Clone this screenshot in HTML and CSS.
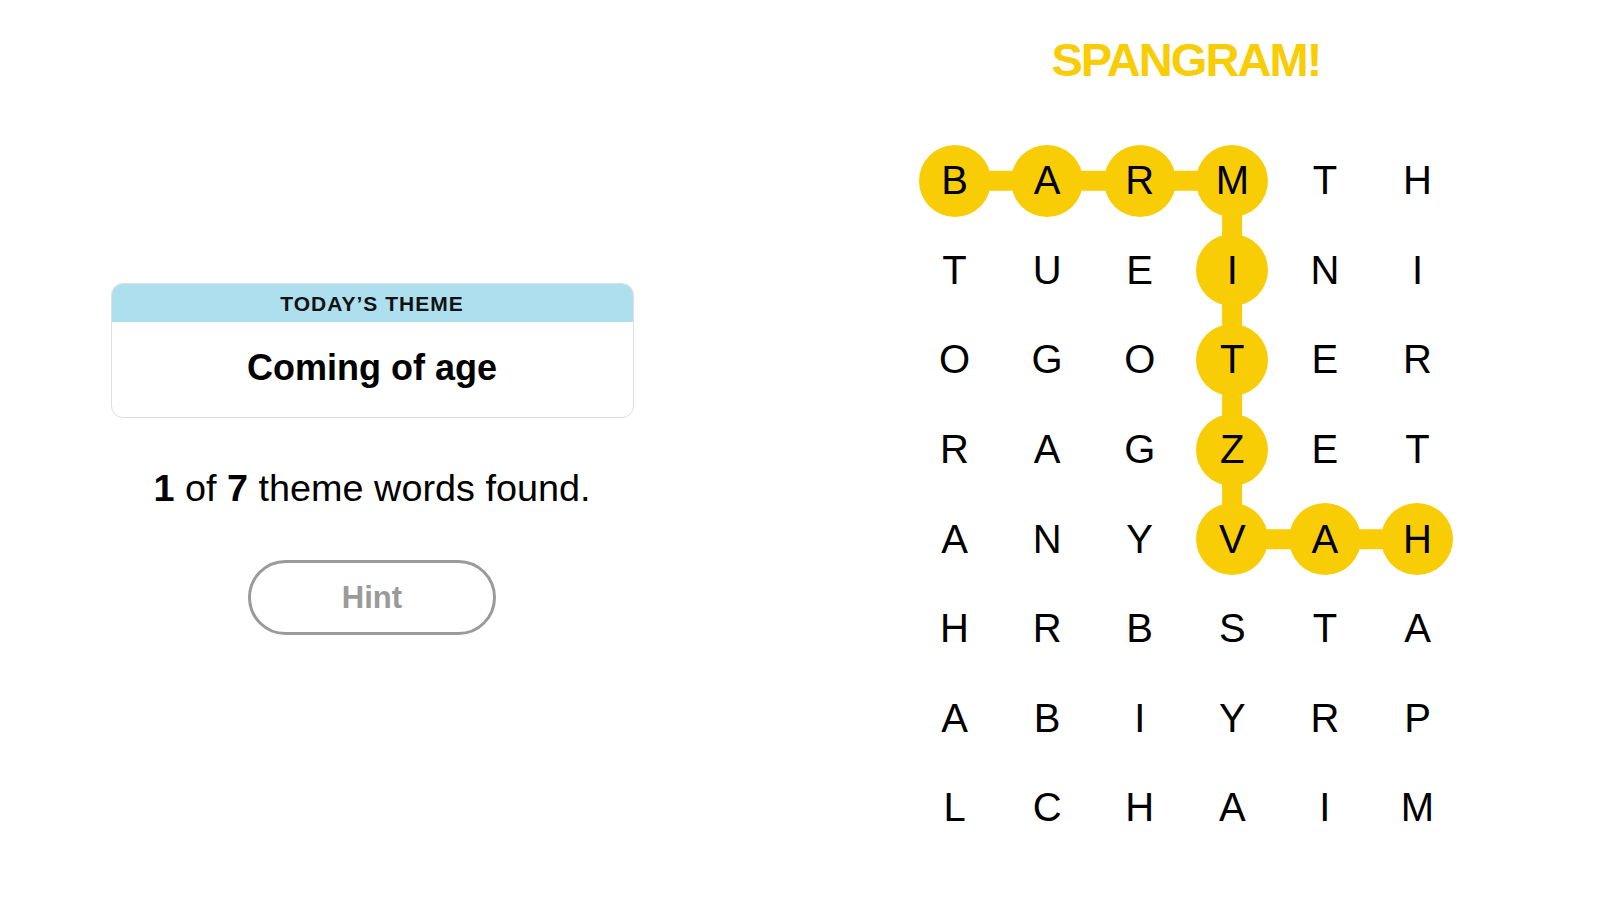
FILE: index.html
```html
<!DOCTYPE html>
<html lang="en">
<head>
<meta charset="utf-8">
<title>Strands</title>
<link rel="stylesheet" href="styles.css">
</head>
<body>
<main class="page">
  <section class="left">
    <div class="theme-card">
      <div class="theme-head">TODAY’S THEME</div>
      <div class="theme-body">Coming of age</div>
    </div>
    <p class="progress"><b>1</b> of <b>7</b> theme words found.</p>
    <button class="hint">Hint</button>
  </section>
  <section class="right">
    <h1 class="status">SPANGRAM!</h1>
    <div class="board">
      <svg class="links" viewBox="0 0 555.6 716.8" width="555.6" height="716.8" aria-hidden="true">
        <polyline points="46.3,44.8 324.1,44.8 324.1,403.2 509.3,403.2" fill="none" stroke="#f8cd05" stroke-width="20"/>
      </svg>
      <div class="cell sel">B</div><div class="cell sel">A</div><div class="cell sel">R</div><div class="cell sel">M</div><div class="cell">T</div><div class="cell">H</div>
      <div class="cell">T</div><div class="cell">U</div><div class="cell">E</div><div class="cell sel">I</div><div class="cell">N</div><div class="cell">I</div>
      <div class="cell">O</div><div class="cell">G</div><div class="cell">O</div><div class="cell sel">T</div><div class="cell">E</div><div class="cell">R</div>
      <div class="cell">R</div><div class="cell">A</div><div class="cell">G</div><div class="cell sel">Z</div><div class="cell">E</div><div class="cell">T</div>
      <div class="cell">A</div><div class="cell">N</div><div class="cell">Y</div><div class="cell sel">V</div><div class="cell sel">A</div><div class="cell sel">H</div>
      <div class="cell">H</div><div class="cell">R</div><div class="cell">B</div><div class="cell">S</div><div class="cell">T</div><div class="cell">A</div>
      <div class="cell">A</div><div class="cell">B</div><div class="cell">I</div><div class="cell">Y</div><div class="cell">R</div><div class="cell">P</div>
      <div class="cell">L</div><div class="cell">C</div><div class="cell">H</div><div class="cell">A</div><div class="cell">I</div><div class="cell">M</div>
    </div>
  </section>
</main>
</body>
</html>
```
FILE: styles.css
```css
* { box-sizing: border-box; }
html, body {
  margin: 0;
  padding: 0;
  background: #ffffff;
  font-family: "Liberation Sans", Arial, sans-serif;
  color: #121212;
}
.page {
  display: flex;
  width: 1600px;
  height: 900px;
}
.left {
  width: 744px;
  display: flex;
  flex-direction: column;
  align-items: center;
  padding-top: 283px;
}
.theme-card {
  width: 523px;
  border: 1px solid #dedede;
  border-radius: 12px;
  overflow: hidden;
  background: #fff;
}
.theme-head {
  background: #aedfee;
  height: 38px;
  display: flex;
  align-items: center;
  justify-content: center;
  padding-top: 2px;
  font-size: 21px;
  font-weight: 700;
  letter-spacing: 1px;
  color: #121212;
}
.theme-body {
  text-align: center;
  font-size: 36px;
  line-height: 44px;
  font-weight: 700;
  padding: 24px 0 27px;
  color: #000;
}
.progress {
  margin: 48px 0 0;
  font-size: 37.8px;
  line-height: 44px;
  color: #000;
}
.progress b { font-weight: 700; }
.hint {
  margin-top: 50px;
  width: 248px;
  height: 75px;
  border: 3px solid #9a9a9a;
  border-radius: 38px;
  background: #fff;
  color: #9a9a9a;
  font-family: "Liberation Sans", Arial, sans-serif;
  font-size: 31px;
  font-weight: 700;
  display: flex;
  align-items: center;
  justify-content: center;
  padding: 0;
}
.right {
  margin-left: 164px;
  width: 556px;
  display: flex;
  flex-direction: column;
  align-items: center;
  padding-top: 32px;
}
.status {
  margin: 0;
  font-size: 47px;
  line-height: 56px;
  font-weight: 700;
  letter-spacing: -1.9px;
  color: #f8cd05;
}
.board {
  position: relative;
  margin-top: 48px;
  display: grid;
  grid-template-columns: repeat(6, 92.6px);
  grid-template-rows: repeat(8, 89.6px);
}
.links {
  position: absolute;
  left: 0;
  top: 0;
  z-index: 0;
}
.cell {
  position: relative;
  z-index: 1;
  display: flex;
  align-items: center;
  justify-content: center;
  font-size: 40px;
  color: #000;
}
.cell.sel::before {
  content: "";
  position: absolute;
  left: 50%;
  top: 50%;
  width: 72px;
  height: 72px;
  margin: -36px 0 0 -36px;
  border-radius: 50%;
  background: #f8cd05;
  z-index: -1;
}
```
